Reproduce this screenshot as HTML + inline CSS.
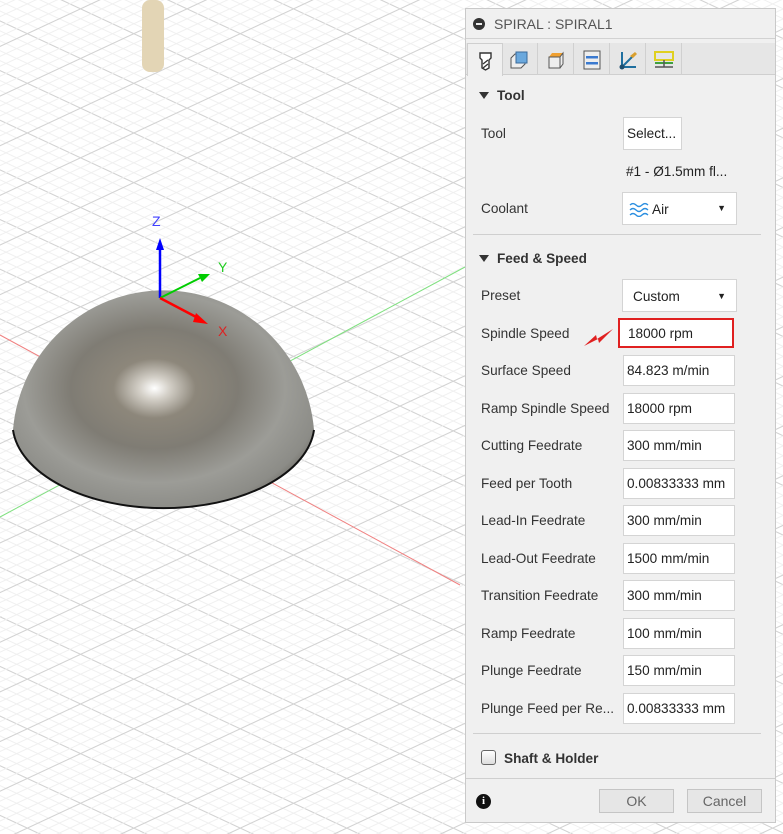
<!DOCTYPE html>
<html style="overflow:hidden"><head><meta charset="utf-8">
<style>
*{box-sizing:border-box;margin:0;padding:0}
html,body{width:783px;height:834px;overflow:hidden}
body{background:#fff;font-family:"Liberation Sans",Arial,sans-serif;position:relative}
#bg{position:absolute;left:0;top:0}
.panel{position:absolute;left:465px;top:8px;width:311px;height:815px;background:#f0f0f0;border:1px solid #c9c9c9;overflow:hidden}
.hdr{height:30px;border-bottom:1px solid #d2d2d2;display:flex;align-items:center;font-size:14px;color:#555;padding-left:7px}
.hdr .dot{width:12px;height:12px;border-radius:50%;background:#333;position:relative;margin-right:9px}
.hdr .dot:after{content:"";position:absolute;left:3px;top:5px;width:6px;height:2px;background:#eee}
.tabs{position:absolute;top:34px;left:0;width:309px;height:32px;background:#e6e6e6;border-bottom:1px solid #cfcfcf}
.tab{position:absolute;top:0;height:32px;width:36px;border-right:1px solid #d0d0d0}
.tab.act{background:#f0f0f0;border:1px solid #cfcfcf;border-bottom:none;height:33px;left:1px}
.tab svg{position:absolute;left:7px;top:6px}
.sec{position:absolute;left:13px;font-weight:bold;font-size:13.6px;color:#333}
.sec:before{content:"";display:inline-block;border-left:5px solid transparent;border-right:5px solid transparent;border-top:7px solid #333;margin-right:8px;vertical-align:1px}
.lbl{position:absolute;left:15px;font-size:13.6px;color:#333}
.fld{position:absolute;left:157px;width:112px;height:31px;background:#fff;border:1px solid #d4d4d4;font-size:13.6px;color:#222;padding:7px 0 0 3px}
.sep{position:absolute;left:7px;width:288px;height:1px;background:#cfcfcf}
.btn{position:absolute;top:780px;height:24px;background:#e6e6e6;border:1px solid #c5c5c5;font-size:14px;color:#666;text-align:center;padding-top:3px}
</style></head><body>
<svg id="bg" width="783" height="834">
<defs>
<pattern id="g" width="1000" height="9" patternUnits="userSpaceOnUse"><rect y="0" width="1000" height="1" fill="#f0f0f0"/></pattern>
<pattern id="G" width="1000" height="45" patternUnits="userSpaceOnUse"><rect y="0" width="1000" height="1" fill="#d2d2d2"/></pattern>
<radialGradient id="dome" cx="0.47" cy="0.45" r="0.62">
<stop offset="0" stop-color="#ffffff"/><stop offset="0.08" stop-color="#d4d0c8"/><stop offset="0.22" stop-color="#8d877b"/><stop offset="0.45" stop-color="#7f7c74"/><stop offset="0.7" stop-color="#9c9c97"/><stop offset="0.9" stop-color="#8c8c87"/><stop offset="1" stop-color="#6a6862"/>
</radialGradient>
</defs>
<g transform="rotate(25 400 400)"><rect x="-600" y="-600" width="2000" height="2000" fill="url(#g)"/><rect x="-600" y="-600" width="2000" height="2000" fill="url(#G)"/></g>
<g transform="rotate(-25 400 400)"><rect x="-600" y="-600" width="2000" height="2000" fill="url(#g)"/><rect x="-600" y="-600" width="2000" height="2000" fill="url(#G)"/></g>
<line x1="0" y1="335" x2="460" y2="585" stroke="#f08080" stroke-width="1"/>
<line x1="0" y1="517" x2="465" y2="267" stroke="#80e080" stroke-width="1"/>
<rect x="142" y="0" width="22" height="72" rx="8" fill="#e3d5b5"/>
<path d="M13 430 A151 152 0 0 1 314 430 A151 85 0 0 1 13 430Z" fill="url(#dome)"/>
<path d="M13 430 A151 85 0 0 0 314 430" fill="none" stroke="#111" stroke-width="2"/>
<line x1="160" y1="298" x2="160" y2="248" stroke="#0000ff" stroke-width="2.5"/>
<polygon points="160,238 156,250 164,250" fill="#0000ff"/>
<line x1="160" y1="298" x2="200" y2="278" stroke="#00cc00" stroke-width="2"/>
<polygon points="210,274 198,274 202,282" fill="#00cc00"/>
<line x1="160" y1="298" x2="198" y2="318" stroke="#ff0000" stroke-width="2.5"/>
<polygon points="208,324 196,313 193,322" fill="#ff0000"/>
<text x="152" y="226" font-size="14" fill="#4040ff" font-family="Liberation Sans">Z</text>
<text x="218" y="272" font-size="14" fill="#22cc22" font-family="Liberation Sans">Y</text>
<text x="218" y="336" font-size="14" fill="#dd2222" font-family="Liberation Sans">X</text>
</svg>
<div class="panel">
<div class="hdr"><span class="dot"></span>SPIRAL : SPIRAL1</div>
<div class="tabs">
<div class="tab act"><svg width="22" height="22"><path d="M5 3h11v5l-2 2v8l-3.5 2-3.5-2v-8l-2-2z" fill="#fff" stroke="#333" stroke-width="1.4"/><path d="M8 14l5-4M8 18l5-4" stroke="#333" stroke-width="1.3"/></svg></div>
<div class="tab" style="left:36px"><svg width="22" height="22"><path d="M2 9l4-4h10v10l-4 4H2z" fill="#eee" stroke="#555"/><path d="M7 3h11v11H7z" fill="#6aa8dd" stroke="#3a6a9a"/></svg></div>
<div class="tab" style="left:72px"><svg width="22" height="22"><path d="M4 8l3-4h11l-3 4z" fill="#f0a030"/><path d="M4 8h11v11H4zM15 8l3-4v11l-3 4" fill="#eee" stroke="#555"/></svg></div>
<div class="tab" style="left:108px"><svg width="22" height="22"><rect x="3" y="2" width="16" height="18" fill="#eee" stroke="#555"/><rect x="5" y="7" width="12" height="2.5" fill="#3a7ad0"/><rect x="5" y="13" width="12" height="2.5" fill="#3a7ad0"/></svg></div>
<div class="tab" style="left:144px"><svg width="22" height="22"><path d="M5 18V3M5 18h14M5 18l10-10" stroke="#1f6f9f" stroke-width="2"/><circle cx="5" cy="18" r="2.5" fill="#1f4f6f"/><path d="M13 7l5-4 2 2-4 4z" fill="#d9a030"/></svg></div>
<div class="tab" style="left:180px"><svg width="22" height="22"><rect x="2" y="3" width="18" height="8" fill="none" stroke="#e0d020" stroke-width="2"/><path d="M2 14h18" stroke="#40a040" stroke-width="2"/><path d="M2 18h18M11 11v7" stroke="#555" stroke-width="1.5"/></svg></div>
</div>
<div class="sec" style="top:79px">Tool</div>
<div class="lbl" style="top:117px">Tool</div>
<div class="fld" style="left:157px;top:108px;width:59px;height:33px;padding-top:8px">Select...</div>
<div class="lbl" style="left:160px;top:155px;color:#222">#1 - Ø1.5mm fl...</div>
<div class="lbl" style="top:192px">Coolant</div>
<div class="fld" style="left:156px;top:183px;width:115px;height:33px;padding:8px 0 0 6px"><svg width="20" height="16" style="vertical-align:-3px"><path d="M1 4q3-3 6 0t6 0 6 0M1 9q3-3 6 0t6 0 6 0M1 14q3-3 6 0t6 0 6 0" fill="none" stroke="#2a8ee0" stroke-width="1.3"/></svg> Air<span style="position:absolute;right:10px;top:10px;font-size:9px">▼</span></div>
<div class="sep" style="top:225px"></div>
<div class="sec" style="top:242px">Feed &amp; Speed</div>
<div class="lbl" style="top:279px">Preset</div>
<div class="fld" style="left:156px;top:270px;width:115px;height:33px;padding:9px 0 0 10px">Custom<span style="position:absolute;right:10px;top:11px;font-size:9px">▼</span></div>
<div class="lbl" style="top:317px">Spindle Speed</div>
<div class="fld" style="top:309px;left:152px;width:116px;height:30px;border:2px solid #e02020;padding-top:6px;padding-left:8px">18000 rpm</div>
<svg style="position:absolute;left:116px;top:316px" width="34" height="24"><path d="M2 21l12-11 1 4 16-10-14 14-1-4z" fill="#e02020"/></svg>
<div class="lbl" style="top:354px">Surface Speed</div><div class="fld" style="top:346px">84.823 m/min</div>
<div class="lbl" style="top:392px">Ramp Spindle Speed</div><div class="fld" style="top:384px">18000 rpm</div>
<div class="lbl" style="top:429px">Cutting Feedrate</div><div class="fld" style="top:421px">300 mm/min</div>
<div class="lbl" style="top:467px">Feed per Tooth</div><div class="fld" style="top:459px">0.00833333 mm</div>
<div class="lbl" style="top:504px">Lead-In Feedrate</div><div class="fld" style="top:496px">300 mm/min</div>
<div class="lbl" style="top:542px">Lead-Out Feedrate</div><div class="fld" style="top:534px">1500 mm/min</div>
<div class="lbl" style="top:579px">Transition Feedrate</div><div class="fld" style="top:571px">300 mm/min</div>
<div class="lbl" style="top:617px">Ramp Feedrate</div><div class="fld" style="top:609px">100 mm/min</div>
<div class="lbl" style="top:654px">Plunge Feedrate</div><div class="fld" style="top:646px">150 mm/min</div>
<div class="lbl" style="top:692px">Plunge Feed per Re...</div><div class="fld" style="top:684px">0.00833333 mm</div>
<div class="sep" style="top:724px"></div>
<div style="position:absolute;left:15px;top:741px;width:15px;height:15px;border:1px solid #666;border-radius:3px;background:linear-gradient(#fff,#ddd)"></div>
<div style="position:absolute;left:38px;top:742px;font-size:13.6px;font-weight:bold;color:#333">Shaft &amp; Holder</div>
<div style="position:absolute;left:0;top:769px;width:309px;height:1px;background:#cfcfcf"></div>
<div style="position:absolute;left:10px;top:785px;width:15px;height:15px;border-radius:50%;background:#111;color:#fff;font-size:11px;font-weight:bold;text-align:center;line-height:15px;font-family:'Liberation Serif',serif">i</div>
<div class="btn" style="left:133px;width:75px">OK</div>
<div class="btn" style="left:221px;width:75px">Cancel</div>
</div>
</body></html>
